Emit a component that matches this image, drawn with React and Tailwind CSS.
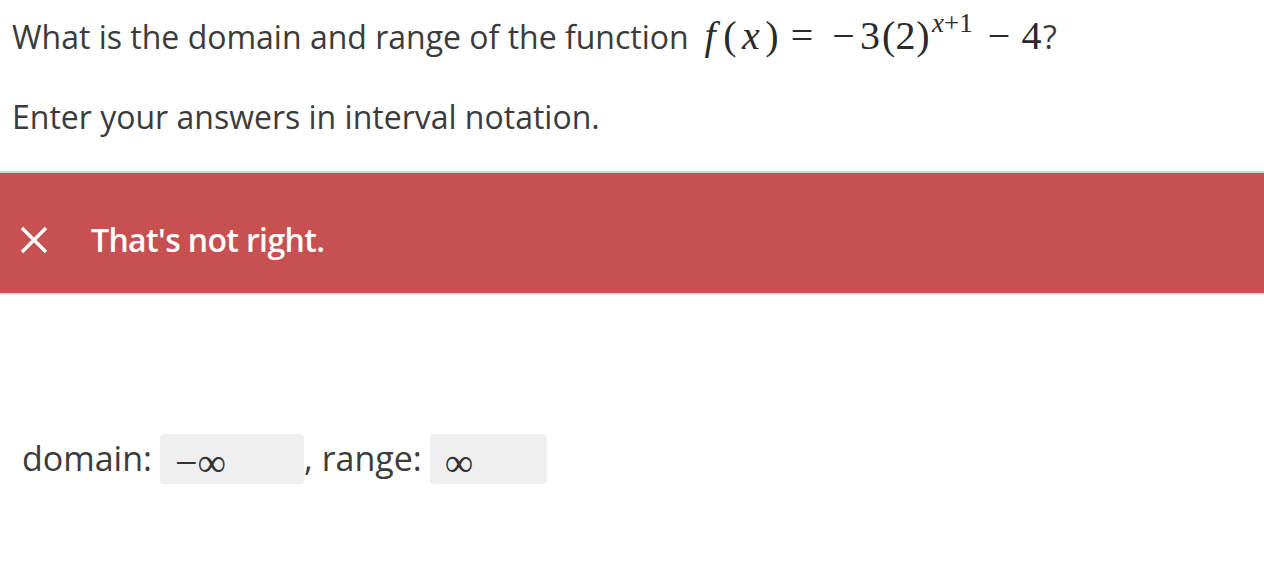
import React from 'react';

// glyphs of the formula, each in a box of its own width so the spacing reads like KaTeX
const formula = [
  { t: 'f', w: 'w-[26px]', i: true },
  { t: '(', w: 'w-[14px]' },
  { t: 'x', w: 'w-[28px]', i: true },
  { t: ')', w: 'w-[14px]' },
  { t: '=', w: 'w-[32px] ml-[7px]' },
  { t: '−', w: 'w-[29px] ml-[11px]' },
  { t: '3', w: 'w-[24px]' },
  { t: '(', w: 'w-[13px]' },
  { t: '2', w: 'w-[21px]' },
  { t: ')', w: 'w-[14px]' },
];

const MathInput = ({ value, width }) => (
  <span className={`inline-flex h-[50px] items-center rounded-[4px] bg-[#efefef] px-[15px] pt-[8px] font-['Liberation_Serif',serif] text-[40px] leading-none text-[#333] ${width}`}>
    {value}
  </span>
);

export default function App() {
  return (
    <div className="min-h-[573px] bg-white font-['Open_Sans','Noto_Sans',sans-serif] text-[#3b3b3b]">
      <div className="px-[12px] pt-[12px]">
        <div className="flex items-baseline text-[32px] leading-[48px]">
          <span className="whitespace-pre">What is the domain and range of the function </span>
          <span className="flex items-baseline font-['Liberation_Serif',serif] text-[40px] leading-[48px] text-[#2a2a2a]">
            {formula.map((g, k) => (
              <span key={k} className={`inline-block text-center ${g.w} ${g.i ? 'italic' : ''}`}>{g.t}</span>
            ))}
            <span className="relative -top-[17px] ml-[2px] w-[52px] text-[27px] leading-none">
              <i>x</i>+1
            </span>
            <span className="inline-block w-[30px] text-center">−</span>
            <span className="ml-[6px] inline-block w-[23px] text-center">4</span>
          </span>
          <span>?</span>
        </div>
        <p className="mt-[32px] text-[32px] leading-[48px]">Enter your answers in interval notation.</p>
      </div>

      <div className="mt-[30px] flex h-[124px] items-center border-t-2 border-b-2 border-t-[#d6d6d6] border-b-[#e2e2e2] bg-[#c75050] pt-[14px] text-white">
        <svg className="ml-[20px] h-[28px] w-[28px]" viewBox="0 0 28 28" fill="none" stroke="white" strokeWidth="3.4">
          <path d="M2 2 L26 26 M26 2 L2 26" />
        </svg>
        <span className="ml-[43px] text-[32px] font-semibold tracking-[-0.65px]">That's not right.</span>
      </div>

      <div className="mt-[138px] flex items-center pl-[22px] text-[34px]">
        <span>domain:</span>
        <span className="ml-[8px] flex"><MathInput value="−∞" width="w-[144px]" /></span>
        <span>, range:</span>
        <span className="ml-[8px] flex"><MathInput value="∞" width="w-[117px]" /></span>
      </div>
    </div>
  );
}
